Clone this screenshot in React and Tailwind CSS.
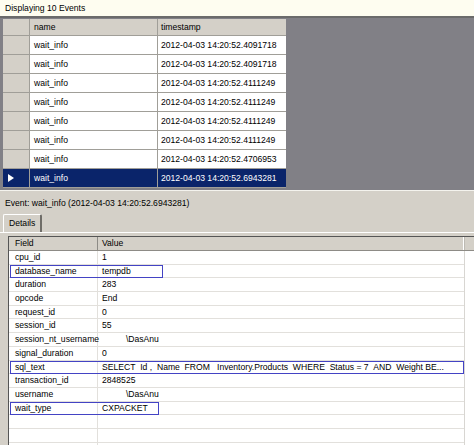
import React from "react";

const events = [
  "2012-04-03 14:20:52.4091718",
  "2012-04-03 14:20:52.4091718",
  "2012-04-03 14:20:52.4111249",
  "2012-04-03 14:20:52.4111249",
  "2012-04-03 14:20:52.4111249",
  "2012-04-03 14:20:52.4111249",
  "2012-04-03 14:20:52.4706953",
  "2012-04-03 14:20:52.6943281",
];

const fields = [
  ["cpu_id", "1"],
  ["database_name", "tempdb", 153],
  ["duration", "283"],
  ["opcode", "End"],
  ["request_id", "0"],
  ["session_id", "55"],
  ["session_nt_username", "\u00a0\u00a0\u00a0\u00a0\u00a0\u00a0\u00a0\u00a0\u00a0\u00a0\\DasAnu"],
  ["signal_duration", "0"],
  ["sql_text", "SELECT\u00a0\u00a0Id\u00a0,\u00a0\u00a0Name\u00a0\u00a0FROM\u00a0\u00a0\u00a0Inventory.Products\u00a0\u00a0WHERE\u00a0\u00a0Status\u00a0=\u00a07\u00a0\u00a0AND\u00a0\u00a0Weight BE...", 454],
  ["transaction_id", "2848525"],
  ["username", "\u00a0\u00a0\u00a0\u00a0\u00a0\u00a0\u00a0\u00a0\u00a0\u00a0\\DasAnu"],
  ["wait_type", "CXPACKET", 149],
  ["", ""],
  ["", ""],
  ["", ""],
];

export default function App() {
  return (
    <div
      className="w-[474px] h-[445px] overflow-hidden bg-[#d4d0c8] text-[8.6px] text-black leading-none"
      style={{ fontFamily: '"Liberation Sans", Arial, sans-serif' }}
    >
      {/* top info bar */}
      <div className="h-[18px] bg-[#fefdf0] border-b-2 border-[#6b6b6b] flex items-center pl-[5px]">
        Displaying 10 Events
      </div>

      {/* events grid area */}
      <div className="h-[172px] bg-[#818086] pl-[3px] pt-[1px]">
        <div className="w-[283px]">
          {/* header */}
          <div className="flex h-[17px]">
            <div className="w-[27px] bg-[#d4d0c8] border-r border-b border-[#a09e98]" />
            <div className="w-[128px] bg-[#d4d0c8] border-r border-b border-[#a09e98] flex items-center pl-[4px]">
              name
            </div>
            <div className="w-[128px] bg-[#d4d0c8] border-b border-[#a09e98] flex items-center pl-[3px]">
              timestamp
            </div>
          </div>
          {events.map((ts, i) => {
            const sel = i === events.length - 1;
            return (
              <div key={i} className="flex h-[19px]">
                <div
                  className={
                    sel
                      ? "w-[27px] bg-[#0a246a] border-r border-b border-[#a09e98] flex items-center pl-[5px]"
                      : "w-[27px] bg-[#d4d0c8] border-r border-b border-[#a09e98]"
                  }
                >
                  {sel && (
                    <svg width="6" height="8" viewBox="0 0 6 8">
                      <polygon points="0,0 6,4 0,8" fill="#ffffff" />
                    </svg>
                  )}
                </div>
                <div
                  className={
                    sel
                      ? "w-[128px] bg-[#0a246a] text-white border-r border-b border-[#a09e98] flex items-center pl-[4px]"
                      : "w-[128px] bg-white border-r border-b border-[#a09e98] flex items-center pl-[4px]"
                  }
                >
                  wait_info
                </div>
                <div
                  className={
                    sel
                      ? "w-[128px] bg-[#0a246a] text-white border-b border-[#a09e98] flex items-center pl-[3px]"
                      : "w-[128px] bg-white border-b border-[#a09e98] flex items-center pl-[3px]"
                  }
                >
                  {ts}
                </div>
              </div>
            );
          })}
        </div>
      </div>

      {/* splitter */}
      <div className="h-[2px] border-t border-[#f4f3ee]" />

      {/* event label */}
      <div className="h-[22px] flex items-center pl-[5px]">
        Event: wait_info (2012-04-03 14:20:52.6943281)
      </div>

      {/* tab */}
      <div className="h-[18px] flex items-end pl-[3px]">
        <div className="h-[18px] px-[5px] flex items-center border-t border-l border-white border-r-2 border-r-[#6f6d68] rounded-t-[2px]">
          Details
        </div>
      </div>

      {/* tab panel */}
      <div className="border-t border-white pt-[3px] pl-[8px]">
        <div className="border-t border-l border-[#555] bg-white">
          {/* header */}
          <div className="flex h-[14px] bg-[#d4d0c8] border-b border-[#8d8b86]">
            <div className="w-[89px] border-r border-[#8d8b86] flex items-center pl-[6px]">Field</div>
            <div className="w-[362px] flex items-center pl-[4px]">Value</div>
            <div className="w-[4px] border-r border-white" />
            <div className="flex-1 border-l border-[#bdbab3]" />
          </div>
          {fields.map(([f, v, box], i) => (
            <div key={i} className="relative flex h-[13.7px]">
              <div className="w-[89px] border-r border-b border-[#e2e0dc] flex items-center pl-[6px]">
                {f}
              </div>
              <div className="w-[366px] border-b border-[#e2e0dc] flex items-center pl-[4px] whitespace-nowrap overflow-hidden">
                {v}
              </div>
              <div className="flex-1 border-l border-[#d8d6d2]" />
              {box && (
                <div
                  className="absolute left-[1px] top-0 h-[13.7px] border border-[#4343c4]"
                  style={{ width: box }}
                />
              )}
            </div>
          ))}
        </div>
      </div>
    </div>
  );
}
